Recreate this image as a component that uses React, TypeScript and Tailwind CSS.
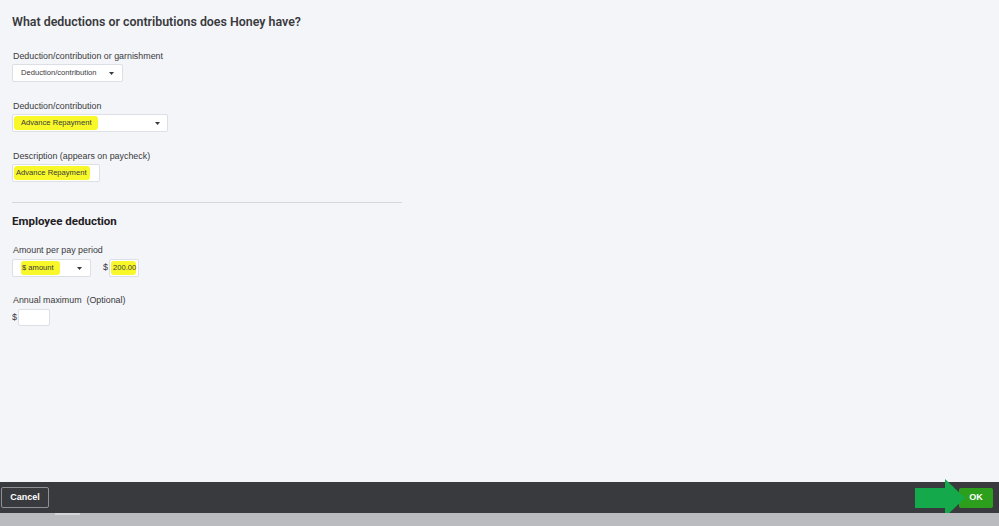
import React from "react";

const font = { fontFamily: '"Liberation Sans", Arial, sans-serif' };
const headFont = { fontFamily: 'Roboto, "Liberation Sans", Arial, sans-serif' };

function Caret() {
  return (
    <svg width="5" height="3" viewBox="0 0 5 3" className="shrink-0">
      <path d="M0 0 L5 0 L2.5 3 Z" fill="#393a3d" />
    </svg>
  );
}

function Marker({ children, className = "" }: { children: React.ReactNode; className?: string }) {
  return (
    <span className={`bg-[#f7f729] rounded-[3px] px-[2px] leading-[14px] ${className}`}>{children}</span>
  );
}

function Label({ children, className = "" }: { children: React.ReactNode; className?: string }) {
  return <div className={`text-[8.9px] leading-[12px] text-[#393a3d] pl-[1px] ${className}`}>{children}</div>;
}

export default function App() {
  return (
    <div className="w-[999px] h-[526px] flex flex-col overflow-hidden" style={font}>
      {/* Form body */}
      <div className="flex-1 bg-[#f4f5f8] pl-3">
        <h1 className="mt-[12px] text-[12.4px] leading-[20px] font-semibold text-[#393a3d]" style={headFont}>
          What deductions or contributions does Honey have?
        </h1>

        <Label className="mt-[18px]">Deduction/contribution or garnishment</Label>
        <div className="mt-[2px] w-[111px] h-[18px] bg-white border border-[#dcdfe3] rounded-[2px] flex items-center pl-[8px] pr-[8px] gap-[12px]">
          <span className="text-[7.6px] text-[#393a3d]">Deduction/contribution</span>
          <Caret />
        </div>

        <Label className="mt-[18px]">Deduction/contribution</Label>
        <div className="mt-[2px] w-[156px] h-[18px] bg-white border border-[#dcdfe3] rounded-[2px] flex items-center justify-between pl-[1px] pr-[7px]">
          <Marker className="text-[7.6px] text-[#393a3d] pl-[7px] pr-[6px]">Advance Repayment</Marker>
          <Caret />
        </div>

        <Label className="mt-[18px]">Description (appears on paycheck)</Label>
        <div className="mt-[2px] w-[88px] h-[18px] bg-white border border-[#dcdfe3] rounded-[2px] flex items-center pl-[1px]">
          <Marker className="text-[7.6px] text-[#393a3d] pl-[2px] pr-[3px]">Advance Repayment</Marker>
        </div>

        <div className="mt-[20px] w-[390px] h-px bg-[#d4d7dc]" />

        <h2 className="mt-[10px] text-[11.5px] leading-[16px] font-bold text-[#1f2023]" style={headFont}>
          Employee deduction
        </h2>

        <Label className="mt-[15px]">Amount per pay period</Label>
        <div className="mt-[3px] flex items-center">
          <div className="w-[79px] h-[18px] bg-white border border-[#dcdfe3] rounded-[2px] flex items-center justify-between pl-[8px] pr-[8px]">
            <Marker className="text-[7.6px] text-[#393a3d] pl-[1px] pr-[6px]">$ amount</Marker>
            <Caret />
          </div>
          <span className="ml-[12px] text-[9px] text-[#393a3d]">$</span>
          <div className="ml-[1px] w-[30px] h-[18px] bg-white border border-[#dcdfe3] rounded-[2px] flex items-center pl-[1px] overflow-hidden">
            <Marker className="text-[7.6px] text-[#393a3d] pl-[2px] pr-0 whitespace-nowrap">200.00</Marker>
          </div>
        </div>

        <Label className="mt-[17px]">Annual maximum&nbsp; (Optional)</Label>
        <div className="mt-[3px] flex items-center">
          <span className="text-[9px] text-[#393a3d]">$</span>
          <div className="ml-[1px] w-[32px] h-[17px] bg-white border border-[#dcdfe3] rounded-[2px]" />
        </div>
      </div>

      {/* Footer */}
      <div className="relative h-[31px] bg-[#393a3d] flex items-center justify-between pl-[1px] pr-[6px]">
        <button className="h-[21px] w-[48px] border border-[#8d9096] rounded-[2px] text-white text-[9px] font-semibold">
          Cancel
        </button>
        <button className="h-[20px] w-[34px] bg-[#2ca01c] rounded-[2px] text-white text-[9px] font-bold">OK</button>
        <svg
          className="absolute left-[914px] top-[-3px]"
          width="52"
          height="38"
          viewBox="0 0 52 38"
        >
          <path d="M1 9 L31 9 L31 0 L51 19 L31 38 L31 29 L1 29 Z" fill="#14a94a" />
        </svg>
      </div>
      <div className="h-[13px] bg-[#b9bbbe] relative">
        <div className="absolute left-[55px] top-0 w-[25px] h-[2px] bg-[#d3d5d8]" />
      </div>
    </div>
  );
}
